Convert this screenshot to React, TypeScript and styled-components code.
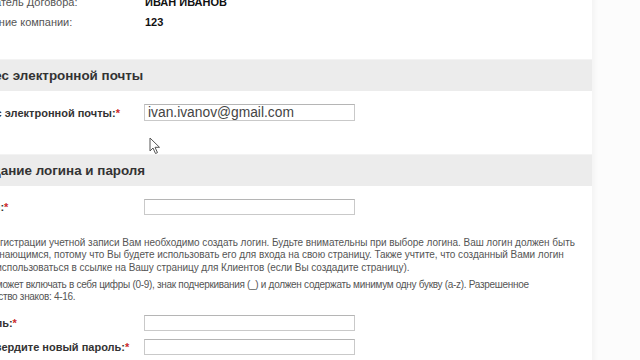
import styled, { createGlobalStyle } from "styled-components";

const GlobalStyle = createGlobalStyle`
  *,*::before,*::after{ box-sizing:border-box; }
  html,body{ margin:0; padding:0; }
  body{
    background:#fcfcfc;
    font-family:"Liberation Sans", Arial, sans-serif;
    overflow:hidden;
  }
`;

/* visible window; the page is cropped on the left */
const Viewport = styled.div`
  position: relative;
  width: 640px;
  height: 360px;
  overflow: hidden;
`;

const Sheet = styled.div`
  margin: -8px 0 0 -32px;
  width: 624px;
  min-height: 400px;
  background: #fff;
  box-shadow: 3px 0 5px rgba(0, 0, 0, 0.035);
`;

const InfoRow = styled.div`
  display: grid;
  grid-template-columns: 177px 1fr;
  height: 20px;
  align-items: center;
  font-size: 11px;
`;

const InfoLabel = styled.span`
  color: #555;
  white-space: nowrap;
`;

const InfoValue = styled.span`
  color: #111;
  font-weight: 700;
`;

const SectionHeader = styled.div<{ $top: number }>`
  margin-top: ${(p) => p.$top}px;
  height: 32px;
  line-height: 32px;
  background: #ececec;
  border-top: 1px solid #f3f3f3;
  color: #333;
  font-size: 13.4px;
  font-weight: 700;
  white-space: nowrap;
`;

const FieldRow = styled.div<{ $top: number }>`
  display: grid;
  grid-template-columns: 176px 211px;
  align-items: center;
  margin-top: ${(p) => p.$top}px;
`;

const FieldLabel = styled.label`
  color: #333;
  font-size: 11px;
  font-weight: 700;
  white-space: nowrap;
`;

const Req = styled.span`
  color: #cc2a2a;
`;

const TextInput = styled.input<{ $h: number }>`
  width: 211px;
  height: ${(p) => p.$h}px;
  margin: 0;
  padding: 0 3px;
  border: 1px solid #c9c9c9;
  border-top-color: #b5b5b5;
  background: #fff;
  color: #444;
  font-family: "Liberation Sans", Arial, sans-serif;
  font-size: 13.8px;
  outline: none;
`;

const Note = styled.p<{ $top: number; $track: number }>`
  margin: ${(p) => p.$top}px 0 0;
  color: #555;
  font-size: 10px;
  line-height: 12.3px;
  letter-spacing: ${(p) => p.$track}px;
  white-space: nowrap;
`;

const Cursor = styled.svg`
  position: absolute;
  left: 149px;
  top: 137px;
`;

export default function App() {
  return (
    <>
      <GlobalStyle />
      <Viewport>
        <Sheet>
          <InfoRow>
            <InfoLabel>Держатель Договора:</InfoLabel>
            <InfoValue>ИВАН ИВАНОВ</InfoValue>
          </InfoRow>
          <InfoRow>
            <InfoLabel>Название компании:</InfoLabel>
            <InfoValue>123</InfoValue>
          </InfoRow>

          <SectionHeader $top={27}>Адрес электронной почты</SectionHeader>
          <FieldRow $top={13}>
            <FieldLabel>
              Адрес электронной почты:<Req>*</Req>
            </FieldLabel>
            <TextInput $h={17} defaultValue="ivan.ivanov@gmail.com" />
          </FieldRow>

          <SectionHeader $top={33}>Создание логина и пароля</SectionHeader>
          <FieldRow $top={13}>
            <FieldLabel>
              Логин:<Req>*</Req>
            </FieldLabel>
            <TextInput $h={16} />
          </FieldRow>

          <Note $top={22} $track={-0.05}>
            При регистрации учетной записи Вам необходимо создать логин. Будьте внимательны при выборе логина. Ваш логин должен быть
            <br />
            распознающимся, потому что Вы будете использовать его для входа на свою страницу. Также учтите, что созданный Вами логин
            <br />
            будет использоваться в ссылке на Вашу страницу для Клиентов (если Вы создадите страницу).
          </Note>
          <Note $top={5} $track={-0.3}>
            Логин может включать в себя цифры (0-9), знак подчеркивания (_) и должен содержать минимум одну букву (a-z). Разрешенное
            <br />
            количество знаков: 4-16.
          </Note>

          <FieldRow $top={12}>
            <FieldLabel>
              Пароль:<Req>*</Req>
            </FieldLabel>
            <TextInput $h={16} type="password" />
          </FieldRow>
          <FieldRow $top={8}>
            <FieldLabel>
              Подтвердите новый пароль:<Req>*</Req>
            </FieldLabel>
            <TextInput $h={16} type="password" />
          </FieldRow>
        </Sheet>

        <Cursor width="12" height="18" viewBox="0 0 12 18">
          <path
            d="M1 1 L1 14 L4 11 L6.5 16.5 L8.5 15.6 L6 10.3 L10.5 10.3 Z"
            fill="#fff"
            stroke="#555"
            strokeWidth="1"
            strokeLinejoin="round"
          />
        </Cursor>
      </Viewport>
    </>
  );
}
